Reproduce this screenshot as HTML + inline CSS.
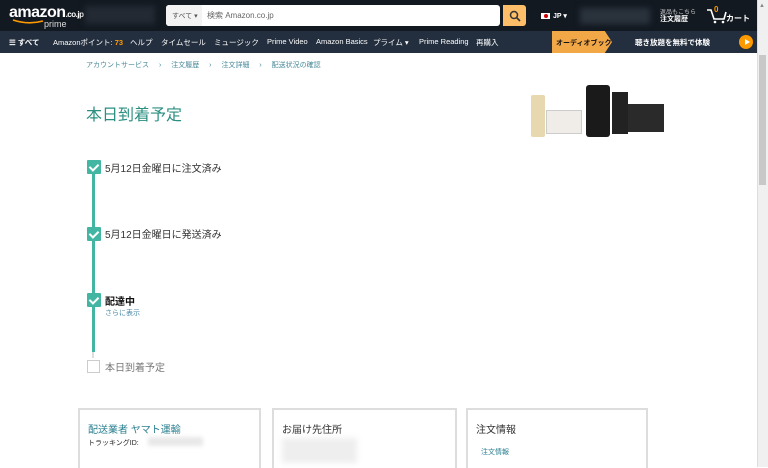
<!DOCTYPE html>
<html><head><meta charset="utf-8"><style>
*{margin:0;padding:0;box-sizing:border-box}
body{width:768px;height:467px;overflow:hidden;background:#fff;font-family:"Liberation Sans","Noto Sans CJK JP",sans-serif;position:relative}
.a{position:absolute}
.hd{left:0;top:0;width:768px;height:31px;background:#131921}
.nv{left:0;top:31px;width:768px;height:22px;background:#232f3e;color:#fff;font-size:7.5px}
.nv span{position:absolute;top:6px;white-space:nowrap}
.ck{width:14px;height:14px;background:#43b6a3;border-radius:1px}
.ck:after{content:"";position:absolute;left:4px;top:2px;width:4px;height:7px;border:solid #fff;border-width:0 2px 2px 0;transform:rotate(45deg)}
.t{font-size:10px;color:#333;white-space:nowrap}
.box{border:2px solid #ddd;border-bottom:none;top:408px;height:60px}
.sb{left:757px;top:0;width:11px;height:467px;background:#f0f0f0;border-left:1px solid #ddd}
</style></head><body>
<div class="a hd"></div>
<div class="a" style="left:9px;top:4px;color:#fff;font-size:16px;font-weight:bold;letter-spacing:-0.5px">amazon<span style="font-size:8px">.co.jp</span></div>
<div class="a" style="left:44px;top:19px;color:#ddd;font-size:9px">prime</div>
<svg class="a" style="left:12px;top:19px" width="34" height="6"><path d="M1 1 Q16 6 31 2" stroke="#f90" stroke-width="1.6" fill="none"/></svg>
<div class="a" style="left:85px;top:6px;width:70px;height:18px;background:#232a33;filter:blur(3px)"></div>
<div class="a" style="left:166px;top:5px;width:334px;height:21px;background:#fff;border-radius:3px"></div>
<div class="a" style="left:166px;top:5px;width:36px;height:21px;background:#f3f3f3;border-radius:3px 0 0 3px;font-size:7px;color:#555;padding:6px 0 0 6px">すべて ▾</div>
<div class="a" style="left:207px;top:10px;font-size:8px;color:#666">検索 Amazon.co.jp</div>
<div class="a" style="left:503px;top:5px;width:23px;height:21px;background:#febd69;border-radius:0 3px 3px 0"></div>
<svg class="a" style="left:508px;top:9px" width="14" height="14"><circle cx="6" cy="6" r="3.5" stroke="#333" stroke-width="1.5" fill="none"/><path d="M8.5 8.5 L12 12" stroke="#333" stroke-width="1.6"/></svg>
<div class="a" style="left:541px;top:13px;width:9px;height:6px;background:#fff"><div style="margin:1px 3px;width:4px;height:4px;border-radius:50%;background:#c00"></div></div>
<div class="a" style="left:553px;top:12px;font-size:7px;color:#fff;font-weight:bold">JP ▾</div>
<div class="a" style="left:580px;top:8px;width:70px;height:16px;background:#2a323c;filter:blur(3px)"></div>
<div class="a" style="left:660px;top:7px;font-size:6px;color:#ccc">返品もこちら</div>
<div class="a" style="left:660px;top:14px;font-size:7px;color:#fff;font-weight:bold">注文履歴</div>
<svg class="a" style="left:706px;top:7px" width="22" height="18"><path d="M1 3 L5 3 L8 12 L18 12 L20 5" stroke="#fff" stroke-width="1.6" fill="none"/><circle cx="9" cy="15" r="1.3" fill="#fff"/><circle cx="17" cy="15" r="1.3" fill="#fff"/></svg>
<div class="a" style="left:714px;top:5px;font-size:8px;color:#f90;font-weight:bold">0</div>
<div class="a" style="left:726px;top:13px;font-size:8px;color:#fff;font-weight:bold">カート</div>
<div class="a nv">
<span style="left:9px;font-weight:bold">☰ すべて</span><span style="left:53px">Amazonポイント: <b style="color:#f90">73</b></span><span style="left:130px">ヘルプ</span><span style="left:161px">タイムセール</span><span style="left:214px">ミュージック</span><span style="left:267px">Prime Video</span><span style="left:316px">Amazon Basics</span><span style="left:373px">プライム ▾</span><span style="left:419px">Prime Reading</span><span style="left:476px">再購入</span>
<div class="a" style="left:552px;top:0;width:60px;height:22px;background:#f3a847;clip-path:polygon(0 0,88% 0,100% 50%,88% 100%,0 100%)"></div>
<span style="left:556px;color:#111;font-size:7px;top:7px;font-weight:bold">オーディオブック</span>
<span style="left:635px;font-weight:bold">聴き放題を無料で体験</span>
<div class="a" style="left:739px;top:4px;width:14px;height:14px;border-radius:50%;background:#f90"></div>
<div class="a" style="left:745px;top:8px;width:0;height:0;border-left:5px solid #fff;border-top:3px solid transparent;border-bottom:3px solid transparent"></div>
</div>
<div class="a" style="left:86px;top:60px;font-size:7px;color:#4a8a9a;white-space:nowrap;word-spacing:8px">アカウントサービス › 注文履歴 › 注文詳細 › 配送状況の確認</div>
<div class="a" style="left:86px;top:101px;font-size:16px;color:#2a8f80">本日到着予定</div>
<div class="a" style="left:531px;top:95px;width:14px;height:42px;background:#e8d8b0;border-radius:2px"></div>
<div class="a" style="left:546px;top:110px;width:36px;height:24px;background:#f0ece8;border:1px solid #ccc"></div>
<div class="a" style="left:586px;top:85px;width:24px;height:52px;background:#1a1a1a;border-radius:3px"></div>
<div class="a" style="left:612px;top:92px;width:16px;height:42px;background:#222"></div>
<div class="a" style="left:628px;top:104px;width:36px;height:28px;background:#2a2a2a"></div>
<div class="a" style="left:92px;top:172px;width:3px;height:180px;background:#43b6a3"></div>
<div class="a" style="left:92px;top:352px;width:2px;height:6px;background:#ddd"></div>
<div class="a ck" style="left:87px;top:160px"></div><div class="a t" style="left:105px;top:160px">5月12日金曜日に注文済み</div>
<div class="a ck" style="left:87px;top:227px"></div><div class="a t" style="left:105px;top:226px">5月12日金曜日に発送済み</div>
<div class="a ck" style="left:87px;top:293px"></div><div class="a t" style="left:105px;top:293px;font-weight:bold;color:#111">配達中</div>
<div class="a" style="left:105px;top:308px;font-size:7px;color:#4a8aa8">さらに表示</div>
<div class="a" style="left:87px;top:360px;width:13px;height:13px;border:1px solid #ccc"></div>
<div class="a t" style="left:105px;top:359px;color:#777">本日到着予定</div>
<div class="a box" style="left:78px;width:183px"></div>
<div class="a" style="left:88px;top:421px;font-size:10px;color:#2a7f90">配送業者 ヤマト運輸</div>
<div class="a" style="left:88px;top:438px;font-size:7px;color:#222">トラッキングID:</div>
<div class="a" style="left:148px;top:437px;width:55px;height:9px;background:#e8e8e8;filter:blur(2px)"></div>
<div class="a box" style="left:272px;width:185px"></div>
<div class="a" style="left:282px;top:421px;font-size:10px;color:#333">お届け先住所</div>
<div class="a" style="left:282px;top:438px;width:75px;height:25px;background:#eee;filter:blur(3px)"></div>
<div class="a box" style="left:466px;width:182px"></div>
<div class="a" style="left:476px;top:421px;font-size:10px;color:#333">注文情報</div>
<div class="a" style="left:481px;top:447px;font-size:7px;color:#2a7f90">注文情報</div>
<div class="a sb"></div>
<div class="a" style="left:759px;top:3px;font-size:6px;color:#888">▲</div>
<div class="a" style="left:759px;top:55px;width:7px;height:130px;background:#c8c8c8"></div>
</body></html>
